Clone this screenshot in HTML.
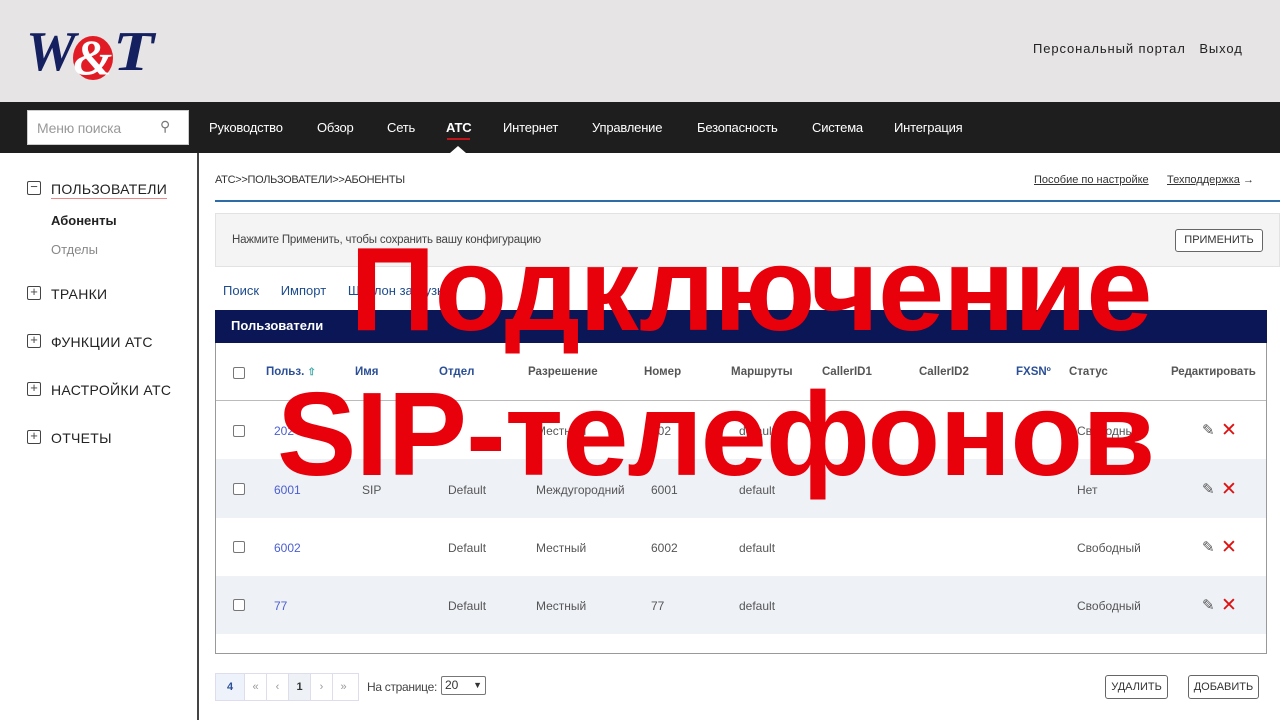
<!DOCTYPE html>
<html><head><meta charset="utf-8"><style>
*{margin:0;padding:0;box-sizing:border-box}
body{width:1280px;height:720px;position:relative;overflow:hidden;background:#fff;font-family:"Liberation Sans",sans-serif;color:#333}
.a{position:absolute;white-space:nowrap}
.top{position:absolute;left:0;top:0;width:1280px;height:102px;background:#e6e4e5}
.nav{position:absolute;left:0;top:102px;width:1280px;height:51px;background:#1e1e1e}
.nav span{position:absolute;top:18px;color:#fff;font-size:13px;letter-spacing:-.2px}
.side{font-size:14px;color:#222;letter-spacing:.3px}
.box{position:absolute;width:14px;height:14px;border:1.5px solid #444;border-radius:2px;font-size:13px;line-height:10px;text-align:center;color:#444}
.th{position:absolute;top:366px;font-size:11.5px;font-weight:bold;color:#555}
.td{position:absolute;font-size:12px;color:#555}
.cb{position:absolute;left:233px;width:12px;height:12px;border:1px solid #777;border-radius:2px;background:#fff}
.btn{position:absolute;border:1px solid #666;border-radius:3px;background:#fff;font-size:11px;color:#333;text-align:center}
.big{position:absolute;color:#e8000b;font-weight:bold;font-family:"Liberation Sans",sans-serif;white-space:nowrap;line-height:1}
.ed{position:absolute;left:1202px;font-size:15px;color:#555}
.x{position:absolute;left:1221px;font-size:19px;color:#e01010;line-height:1}
</style></head><body>
<div class="top"></div>
<div class="a" style="left:26px;top:24px;font-family:'Liberation Serif',serif;font-style:italic;font-weight:bold;font-size:56px;color:#152060;letter-spacing:-3px;line-height:1">W<span style="display:inline-block;width:40px;height:44px;border-radius:50%;background:#e11c24;color:#fff;font-size:50px;text-align:center;line-height:42px;vertical-align:-4px;letter-spacing:0">&amp;</span><span style="display:inline-block;transform:scaleX(1.2);transform-origin:left">T</span></div>
<div class="a" style="left:1033px;top:41px;font-size:13px;color:#222;letter-spacing:.9px">Персональный портал&nbsp;&nbsp; Выход</div>
<div class="nav">
<div style="position:absolute;left:27px;top:8px;width:162px;height:35px;background:#fff;border:1px solid #ccc"></div>
<span style="left:37px;color:#999;font-size:14px;top:18px">Меню поиска</span>
<span style="left:160px;color:#777;font-size:14px;top:16px">⚲</span>
<span style="left:209px">Руководство</span><span style="left:317px">Обзор</span><span style="left:387px">Сеть</span>
<span style="left:446px;font-weight:bold">АТС</span>
<div style="position:absolute;left:447px;top:36px;width:23px;height:2px;background:#c0141c"></div>
<div style="position:absolute;left:450px;top:44px;width:0;height:0;border-left:8px solid transparent;border-right:8px solid transparent;border-bottom:7px solid #fff"></div>
<span style="left:503px">Интернет</span><span style="left:592px">Управление</span><span style="left:697px">Безопасность</span><span style="left:812px">Система</span><span style="left:894px">Интеграция</span>
</div>
<div style="position:absolute;left:197px;top:153px;width:2px;height:567px;background:#444"></div>
<div class="box" style="left:27px;top:181px">−</div><div class="a side" style="left:51px;top:181px;border-bottom:1px solid #e88;padding-bottom:1px">ПОЛЬЗОВАТЕЛИ</div>
<div class="a" style="left:51px;top:213px;font-size:13px;font-weight:bold;color:#222">Абоненты</div>
<div class="a" style="left:51px;top:242px;font-size:13px;color:#888">Отделы</div>
<div class="box" style="left:27px;top:286px">+</div><div class="a side" style="left:51px;top:286px">ТРАНКИ</div>
<div class="box" style="left:27px;top:334px">+</div><div class="a side" style="left:51px;top:334px">ФУНКЦИИ АТС</div>
<div class="box" style="left:27px;top:382px">+</div><div class="a side" style="left:51px;top:382px">НАСТРОЙКИ АТС</div>
<div class="box" style="left:27px;top:430px">+</div><div class="a side" style="left:51px;top:430px">ОТЧЕТЫ</div>
<div class="a" style="left:215px;top:174px;font-size:11px;color:#333;letter-spacing:-.3px">АТС&gt;&gt;ПОЛЬЗОВАТЕЛИ&gt;&gt;АБОНЕНТЫ</div>
<div class="a" style="left:1034px;top:174px;font-size:11px;color:#333;text-decoration:underline">Пособие по настройке</div>
<div class="a" style="left:1167px;top:174px;font-size:11px;color:#333"><u>Техподдержка</u> →</div>
<div style="position:absolute;left:215px;top:200px;width:1065px;height:2px;background:#2e6ca8"></div>
<div style="position:absolute;left:215px;top:213px;width:1065px;height:54px;background:#f4f4f4;border:1px solid #e2e2e2"></div>
<div class="a" style="left:232px;top:234px;font-size:11.5px;color:#444;letter-spacing:-.2px">Нажмите Применить, чтобы сохранить вашу конфигурацию</div>
<div class="btn" style="left:1175px;top:229px;width:88px;height:23px;line-height:21px">ПРИМЕНИТЬ</div>
<div class="a" style="left:223px;top:283px;font-size:13px;color:#1f4c8c">Поиск&nbsp;&nbsp;&nbsp;&nbsp;&nbsp; Импорт&nbsp;&nbsp;&nbsp;&nbsp;&nbsp; Шаблон загрузки</div>
<div style="position:absolute;left:215px;top:310px;width:1052px;height:344px;border:1px solid #999;border-top:none"></div>
<div style="position:absolute;left:215px;top:310px;width:1052px;height:33px;background:#0b1656"></div>
<div class="a" style="left:231px;top:318px;font-size:13px;font-weight:bold;color:#fff">Пользователи</div>
<div style="position:absolute;left:216px;top:400px;width:1050px;height:1px;background:#bbb"></div>
<div style="position:absolute;left:216px;top:459px;width:1050px;height:59px;background:#eef1f6"></div>
<div style="position:absolute;left:216px;top:576px;width:1050px;height:58px;background:#eef1f6"></div>
<div class="cb" style="top:367px"></div>
<div class="th" style="left:266px;color:#2b4f96">Польз. <span style="color:#4aa;font-size:10px">⇧</span></div>
<div class="th" style="left:355px;color:#2b4f96">Имя</div><div class="th" style="left:439px;color:#2b4f96">Отдел</div>
<div class="th" style="left:528px">Разрешение</div><div class="th" style="left:644px">Номер</div><div class="th" style="left:731px">Маршруты</div>
<div class="th" style="left:822px">CallerID1</div><div class="th" style="left:919px">CallerID2</div>
<div class="th" style="left:1016px;color:#2b4f96">FXSNº</div><div class="th" style="left:1069px">Статус</div><div class="th" style="left:1171px;letter-spacing:-.1px">Редактировать</div>

<div class="cb" style="top:425px"></div><div class="td" style="left:274px;top:424px;color:#4b5fd0">202</div><div class="td" style="left:536px;top:424px">Местный</div><div class="td" style="left:651px;top:424px">202</div><div class="td" style="left:739px;top:424px">default</div><div class="td" style="left:1077px;top:424px">Свободный</div><div class="ed" style="top:421px">✎</div><div class="x" style="top:421px">✕</div>
<div class="cb" style="top:483px"></div><div class="td" style="left:274px;top:483px;color:#4b5fd0">6001</div><div class="td" style="left:362px;top:483px">SIP</div><div class="td" style="left:448px;top:483px">Default</div><div class="td" style="left:536px;top:483px">Междугородний</div><div class="td" style="left:651px;top:483px">6001</div><div class="td" style="left:739px;top:483px">default</div><div class="td" style="left:1077px;top:483px">Нет</div><div class="ed" style="top:480px">✎</div><div class="x" style="top:480px">✕</div>
<div class="cb" style="top:541px"></div><div class="td" style="left:274px;top:541px;color:#4b5fd0">6002</div><div class="td" style="left:448px;top:541px">Default</div><div class="td" style="left:536px;top:541px">Местный</div><div class="td" style="left:651px;top:541px">6002</div><div class="td" style="left:739px;top:541px">default</div><div class="td" style="left:1077px;top:541px">Свободный</div><div class="ed" style="top:538px">✎</div><div class="x" style="top:538px">✕</div>
<div class="cb" style="top:599px"></div><div class="td" style="left:274px;top:599px;color:#4b5fd0">77</div><div class="td" style="left:448px;top:599px">Default</div><div class="td" style="left:536px;top:599px">Местный</div><div class="td" style="left:651px;top:599px">77</div><div class="td" style="left:739px;top:599px">default</div><div class="td" style="left:1077px;top:599px">Свободный</div><div class="ed" style="top:596px">✎</div><div class="x" style="top:596px">✕</div>

<div style="position:absolute;left:215px;top:673px;width:144px;height:28px;border:1px solid #dde;display:flex;font-size:11px;color:#999">
<div style="width:28px;background:#eef3fb;color:#2b4f96;font-weight:bold;text-align:center;line-height:26px">4</div>
<div style="width:22px;border-left:1px solid #dde;text-align:center;line-height:26px">«</div>
<div style="width:22px;border-left:1px solid #dde;text-align:center;line-height:26px">‹</div>
<div style="width:22px;border-left:1px solid #dde;background:#eef1f6;color:#333;font-weight:bold;text-align:center;line-height:26px">1</div>
<div style="width:22px;border-left:1px solid #dde;text-align:center;line-height:26px">›</div>
<div style="width:22px;border-left:1px solid #dde;text-align:center;line-height:26px">»</div></div>
<div class="a" style="left:367px;top:680px;font-size:12px;color:#444;letter-spacing:-.3px">На странице:</div>
<div style="position:absolute;left:441px;top:676px;width:45px;height:19px;border:1px solid #777;border-radius:2px;font-size:12px;padding:1px 3px;color:#333">20 <span style="float:right;font-size:9px;margin-top:2px">▼</span></div>
<div class="btn" style="left:1105px;top:675px;width:63px;height:24px;line-height:22px">УДАЛИТЬ</div>
<div class="btn" style="left:1188px;top:675px;width:71px;height:24px;line-height:22px">ДОБАВИТЬ</div>

<div class="big" style="left:350px;top:230px;font-size:119px;letter-spacing:-1px">Подключение</div>
<div class="big" style="left:277px;top:375px;font-size:119px;letter-spacing:-0.9px">SIP-телефонов</div>
</body></html>
